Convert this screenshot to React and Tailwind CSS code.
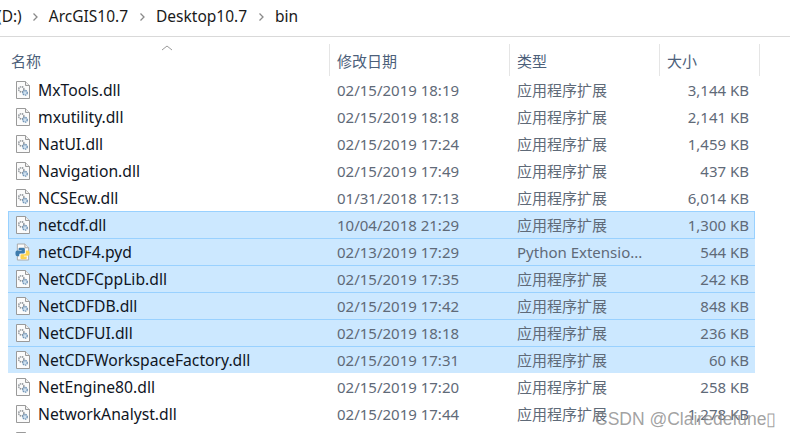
import React from 'react';

const files = [
  { name: 'MxTools.dll', date: '02/15/2019 18:19', type: '应用程序扩展', size: '3,144 KB' },
  { name: 'mxutility.dll', date: '02/15/2019 18:18', type: '应用程序扩展', size: '2,141 KB' },
  { name: 'NatUI.dll', date: '02/15/2019 17:24', type: '应用程序扩展', size: '1,459 KB' },
  { name: 'Navigation.dll', date: '02/15/2019 17:49', type: '应用程序扩展', size: '437 KB' },
  { name: 'NCSEcw.dll', date: '01/31/2018 17:13', type: '应用程序扩展', size: '6,014 KB' },
  { name: 'netcdf.dll', date: '10/04/2018 21:29', type: '应用程序扩展', size: '1,300 KB', selected: true, focus: true },
  { name: 'netCDF4.pyd', date: '02/13/2019 17:29', type: 'Python Extensio...', size: '544 KB', selected: true, python: true },
  { name: 'NetCDFCppLib.dll', date: '02/15/2019 17:35', type: '应用程序扩展', size: '242 KB', selected: true },
  { name: 'NetCDFDB.dll', date: '02/15/2019 17:42', type: '应用程序扩展', size: '848 KB', selected: true },
  { name: 'NetCDFUI.dll', date: '02/15/2019 18:18', type: '应用程序扩展', size: '236 KB', selected: true },
  { name: 'NetCDFWorkspaceFactory.dll', date: '02/15/2019 17:31', type: '应用程序扩展', size: '60 KB', selected: true },
  { name: 'NetEngine80.dll', date: '02/15/2019 17:20', type: '应用程序扩展', size: '258 KB' },
  { name: 'NetworkAnalyst.dll', date: '02/15/2019 17:44', type: '应用程序扩展', size: '1,278 KB' },
  { name: '', date: '', type: '', size: '', stub: true },
];

const DllIcon = () => (
  <svg width="16" height="18" viewBox="0 0 16 18" className="shrink-0">
    <path d="M1.5 .5H10.5L14.5 4.5V17.5H1.5Z" fill="#fbfbfb" stroke="#9a9a9a" />
    <path d="M10.5 .5V4.5H14.5" fill="#eeeeee" stroke="#9a9a9a" />
    <circle cx="6.3" cy="8.3" r="2.6" fill="none" stroke="#8f9499" strokeWidth="1.5" strokeDasharray="1.4 .7" />
    <circle cx="10" cy="11.8" r="2.3" fill="#cfe0ef" stroke="#6f93b5" strokeWidth="1.3" strokeDasharray="1.4 .6" />
  </svg>
);

const PyIcon = () => (
  <svg width="16" height="18" viewBox="0 0 17 18" className="shrink-0">
    <path d="M2.5 .5H10.5L14.5 4.5V17.5H2.5Z" fill="#fbfbfb" stroke="#a5a5a5" />
    <path d="M10.5 .5V4.5H14.5" fill="#eeeeee" stroke="#a5a5a5" />
    <path d="M5 4.5H9Q10.5 4.5 10.5 6V9.5Q10.5 10.5 9 10.5H6Q4.5 10.5 4.5 12V13.5H2.5Q.5 13.5 .5 11V9.5Q.5 7.5 2.5 7.5H7V6.8H3.8V5.5Q3.8 4.5 5 4.5Z" fill="#3d7bad" />
    <path d="M11.5 7.5H13.5Q15.5 7.5 15.5 10V11Q15.5 13 13.5 13H9.5V13.8H12.5V15.5Q12.5 16.8 11 16.8H7.5Q5.8 16.8 5.8 15.3V12.8Q5.8 11.5 7.2 11.5H10Q11.5 11.5 11.5 10Z" fill="#fdd34f" />
  </svg>
);

const Chevron = ({ className = '' }) => (
  <svg width="7" height="10" viewBox="0 0 7 10" className={`shrink-0 ${className}`}>
    <path d="M1.5 1.5L5 5L1.5 8.5" fill="none" stroke="#8a8a8a" strokeWidth="1.3" />
  </svg>
);

const HeaderCell = ({ label, className }) => (
  <div className={`flex items-center border-r border-[#e5e5e5] h-full text-[#4c607a] pt-[2px] ${className}`}>{label}</div>
);

const Row = ({ file }) => {
  let rowClass = '';
  if (file.selected) rowClass = 'bg-[#cce8ff] shadow-[inset_0_1px_0_#99d1ff]';
  if (file.focus) rowClass = 'bg-[#cce8ff] shadow-[inset_0_1px_0_#99d1ff,inset_1px_0_0_#99d1ff,inset_-1px_0_0_#99d1ff]';
  return (
    <div className={`h-[27px] w-[747px] flex items-center pt-[1px] text-[15px] ${rowClass}`}>
      <div className="w-[322px] flex items-center gap-[7px] pl-[7px]">
        {(file.name || file.stub) && (file.python ? <PyIcon /> : <DllIcon />)}
        <span className="pt-[2px] text-[15.7px] text-[#10161f]">{file.name}</span>
      </div>
      <div className="w-[180px] pl-[7px] text-[#5f6a78]">{file.date}</div>
      <div className="w-[142px] pl-[7px] text-[#5f6a78] whitespace-nowrap">{file.type}</div>
      <div className="w-[97px] text-right text-[#5f6a78]">{file.size}</div>
    </div>
  );
};

export default function App() {
  return (
    <div className="relative h-[433px] w-[790px] overflow-hidden bg-white font-['Noto_Sans','Noto_Sans_CJK_SC',sans-serif] text-[15px]">
      {/* ruta */}
      <div className="h-[37px] border-b border-[#d9d9d9] flex items-center gap-[10px] pb-[3px] text-[15.5px] text-[#1a1a1a]">
        <span className="-ml-[3px]">(D:)</span>
        <Chevron />
        <span>ArcGIS10.7</span>
        <Chevron className="ml-[1px]" />
        <span>Desktop10.7</span>
        <Chevron className="ml-[1px]" />
        <span>bin</span>
      </div>

      {/* cabecera */}
      <div className="relative h-[39px] pt-[7px]">
        <div className="flex h-[32px]">
          <HeaderCell label="名称" className="w-[330px] pl-[11px]" />
          <HeaderCell label="修改日期" className="w-[180px] pl-[7px]" />
          <HeaderCell label="类型" className="w-[150px] pl-[7px]" />
          <HeaderCell label="大小" className="w-[100px] pl-[7px]" />
        </div>
        <svg width="12" height="6" viewBox="0 0 12 6" className="absolute left-[161px] top-[8px]">
          <path d="M1 5L6 1L11 5" fill="none" stroke="#9a9a9a" />
        </svg>
      </div>

      {/* filas */}
      <div className="flex flex-col pl-2">
        {files.map((f, i) => (
          <Row key={i} file={f} />
        ))}
      </div>

      <div className="absolute left-[595px] top-[406px] text-[17.5px] text-[#8a8a8a]/80 whitespace-nowrap font-['Liberation_Sans',sans-serif]">
        CSDN @Clairedefune▯
      </div>
    </div>
  );
}
